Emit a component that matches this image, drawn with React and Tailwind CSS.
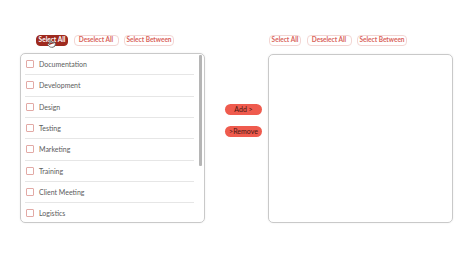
import { Pointer } from 'lucide-react'

const ITEMS = [
  'Documentation',
  'Development',
  'Design',
  'Testing',
  'Marketing',
  'Training',
  'Client Meeting',
  'Logistics',
]

function ToolButton({ label, active, width }) {
  return (
    <button
      className={
        (active
          ? 'bg-[#9e2a1f] text-white border-[#9e2a1f] '
          : 'bg-white text-[#d9625a] border-[#f3d6d3] ') +
        width +
        ' h-[11px] rounded-[4px] text-[6.5px] font-bold leading-none border whitespace-nowrap'
      }
    >
      {label}
    </button>
  )
}

function Toolbar({ activeFirst }) {
  return (
    <div className="flex items-center gap-[5.5px] h-[11px]">
      <ToolButton label="Select All" active={activeFirst} width="w-[32px]" />
      <ToolButton label="Deselect All" width="w-[45px]" />
      <ToolButton label="Select Between" width="w-[50px]" />
    </div>
  )
}

export default function App() {
  return (
    <div
      className="w-[474px] h-[261px] bg-white flex pt-[35px] pl-[20px]"
      style={{ fontFamily: 'Lato, "Open Sans", sans-serif' }}
    >
      {/* Left list */}
      <div className="w-[185px] flex flex-col">
        <div className="relative pl-[16px]">
          <Toolbar activeFirst />
          <Pointer
            size={9}
            strokeWidth={2}
            className="absolute left-[27px] top-[4px] text-[#555] fill-white"
          />
        </div>
        <div className="mt-[7px] h-[170px] rounded-[5px] border border-[#c9c9c9] flex overflow-hidden shadow-[0_0_2px_rgba(0,0,0,0.08)]">
          <div className="flex-1 pl-[4px] pr-[5px] overflow-hidden">
            {ITEMS.map((it) => (
              <div
                key={it}
                className="h-[21.33px] flex items-center gap-[5px] border-b border-[#e6e6e6] pl-[1px]"
              >
                <span className="w-[8px] h-[8px] border border-[#e2a9a5] rounded-[1px] bg-white shrink-0" />
                <span className="text-[7px] text-[#5c5c5c]">{it}</span>
              </div>
            ))}
          </div>
          <div className="w-[4px] mr-[1px] pt-[1px]">
            <div className="h-[111px] w-[3px] bg-[#b5b5b5] rounded-[1px]" />
          </div>
        </div>
      </div>

      {/* Middle actions */}
      <div className="w-[63px] flex flex-col pl-[20px] pt-[69px] gap-[11px]">
        <button className="w-[37px] h-[11px] rounded-full bg-[#ef5b4e] text-[#4a1510] text-[7px] leading-none">
          Add &gt;
        </button>
        <button className="w-[37px] h-[11px] rounded-full bg-[#ef5b4e] text-[#4a1510] text-[7px] leading-none">
          &gt;Remove
        </button>
      </div>

      {/* Right list */}
      <div className="w-[185px] flex flex-col">
        <div className="pl-[1px]">
          <Toolbar />
        </div>
        <div className="mt-[8px] h-[169px] rounded-[5px] border border-[#c9c9c9] shadow-[0_0_2px_rgba(0,0,0,0.08)]" />
      </div>
    </div>
  )
}
